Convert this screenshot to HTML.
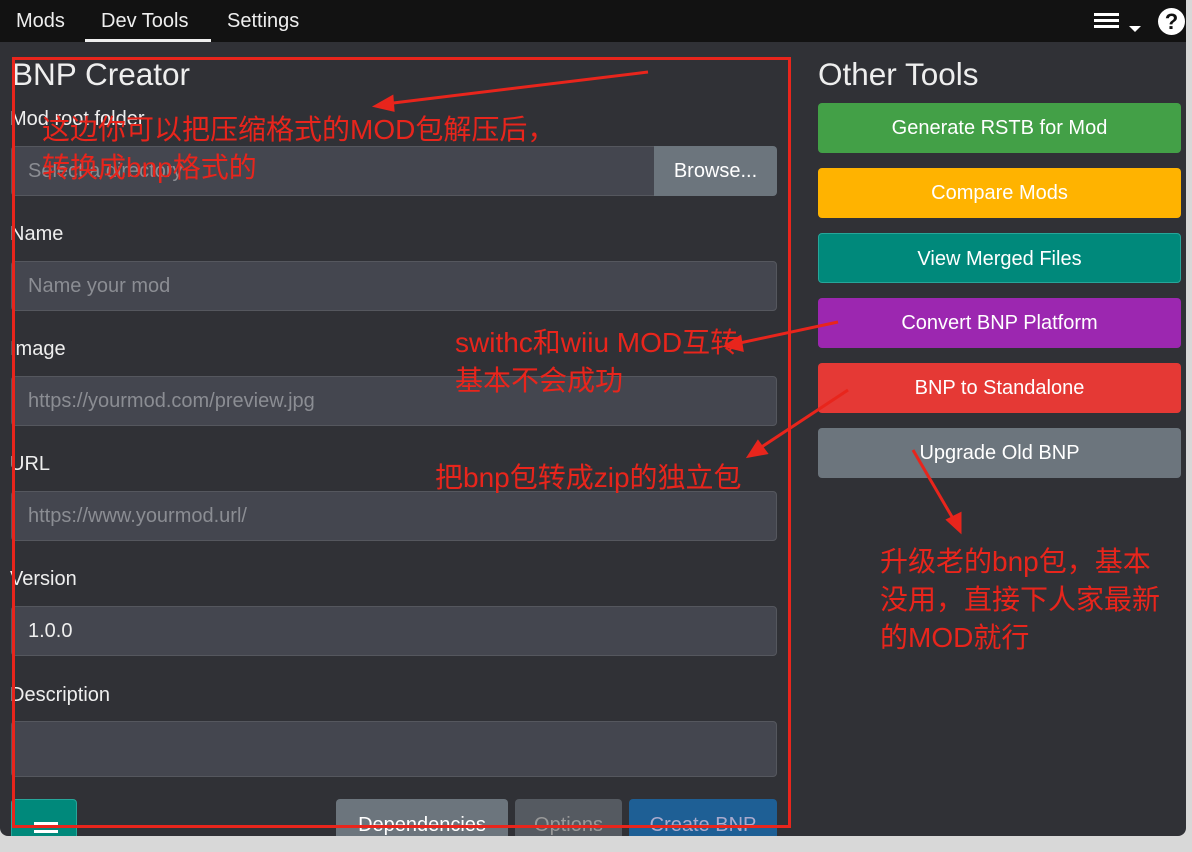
<!DOCTYPE html><html><head><style>
*{box-sizing:border-box;margin:0;padding:0}
body{width:1192px;height:852px;background:#d8d8d8;font-family:"Liberation Sans",Arial,sans-serif;position:relative;overflow:hidden}
#app{position:absolute;left:0;top:0;width:1186px;height:836px;background:#303136;border-radius:0 0 8px 8px;overflow:hidden}
.nav{height:42px;background:#121212;position:relative;color:#eee;font-size:20px}
.nav span{position:absolute;top:10px}
.lbl{position:absolute;left:10px;color:#eee;font-size:20px}
.inp{position:absolute;left:11px;width:766px;height:50px;background:#44464f;border:1px solid #55575e;border-radius:4px;color:#8b8d93;font-size:20px;padding:13px 16px}
.btn{position:absolute;left:818px;width:363px;height:50px;border-radius:4px;color:#fff;font-size:20px;text-align:center;line-height:50px}
.ann{position:absolute;color:#e8251c;font-family:"Liberation Sans","Noto Sans CJK SC",sans-serif;font-size:28px;line-height:38px;white-space:nowrap}
</style></head><body>
<div id="app">
<div class="nav"><span style="left:16px">Mods</span><span style="left:101px">Dev Tools</span><span style="left:227px">Settings</span>
<div style="position:absolute;left:85px;top:39px;width:126px;height:3px;background:#eee"></div>
<div style="position:absolute;left:1094px;top:13px;width:25px;height:3px;background:#fff;box-shadow:0 6px 0 #fff,0 12px 0 #fff"></div>
<div style="position:absolute;left:1129px;top:26px;border:6px solid transparent;border-top:6px solid #fff;border-bottom:0"></div>
<div style="position:absolute;left:1158px;top:8px;width:27px;height:27px;border-radius:50%;background:#fff;color:#111;font-weight:bold;font-size:22px;text-align:center;line-height:27px">?</div>
</div>
<div style="position:absolute;left:12px;top:56px;color:#eee;font-size:31.5px">BNP Creator</div>
<div style="position:absolute;left:818px;top:56px;color:#eee;font-size:31.5px">Other Tools</div>
<div class="lbl" style="top:108px">Mod root folder</div>
<div class="inp" style="top:146px;width:645px;border-radius:4px 0 0 4px">Select a directory</div>
<div style="position:absolute;left:654px;top:146px;width:123px;height:50px;background:#6c757d;border-radius:0 4px 4px 0;color:#fff;font-size:20px;text-align:center;line-height:50px">Browse...</div>
<div class="lbl" style="top:223px">Name</div>
<div class="inp" style="top:261px">Name your mod</div>
<div class="lbl" style="top:338px">Image</div>
<div class="inp" style="top:376px">https://yourmod.com/preview.jpg</div>
<div class="lbl" style="top:453px">URL</div>
<div class="inp" style="top:491px">https://www.yourmod.url/</div>
<div class="lbl" style="top:568px">Version</div>
<div class="inp" style="top:606px;color:#eee">1.0.0</div>
<div class="lbl" style="top:684px">Description</div>
<div class="inp" style="top:721px;height:56px"></div>
<div style="position:absolute;left:11px;top:799px;width:66px;height:50px;background:#00897b;border:1px solid #26a69a;border-radius:4px"><div style="position:absolute;left:22px;top:22px;width:24px;height:3px;background:#fff;box-shadow:0 8px 0 #fff"></div></div>
<div style="position:absolute;left:336px;top:799px;width:172px;height:50px;background:#6c757d;border-radius:4px;color:#fff;font-size:20px;text-align:center;line-height:52px">Dependencies</div>
<div style="position:absolute;left:515px;top:799px;width:107px;height:50px;background:#555a61;border-radius:4px;color:#999;font-size:20px;text-align:center;line-height:52px">Options</div>
<div style="position:absolute;left:629px;top:799px;width:148px;height:50px;background:#1e5f95;border-radius:4px;color:#aac;font-size:20px;text-align:center;line-height:52px">Create BNP</div>
<div class="btn" style="top:103px;background:#43a047">Generate RSTB for Mod</div>
<div class="btn" style="top:168px;background:#ffb300">Compare Mods</div>
<div class="btn" style="top:233px;background:#00897b;border:1px solid #26a69a">View Merged Files</div>
<div class="btn" style="top:298px;background:#9c27b0">Convert BNP Platform</div>
<div class="btn" style="top:363px;background:#e53935">BNP to Standalone</div>
<div class="btn" style="top:428px;background:#6c757d">Upgrade Old BNP</div>
</div>
<div style="position:absolute;left:12px;top:57px;width:779px;height:771px;border:3px solid #e8251c"></div>
<svg style="position:absolute;left:0;top:0" width="1192" height="852">
<g stroke="#e8251c" stroke-width="3" fill="#e8251c">
<line x1="648" y1="72" x2="385" y2="104"/><polygon points="376,106 392,97 393,110"/>
<line x1="838" y1="322" x2="735" y2="344"/><polygon points="726,346 740,337 742,350"/>
<line x1="848" y1="390" x2="757" y2="450"/><polygon points="749,456 758,442 766,453"/>
<line x1="913" y1="450" x2="955" y2="522"/><polygon points="960,531 948,520 960,514"/>
</g></svg>
<div class="ann" style="left:42px;top:111px">这边你可以把压缩格式的MOD包解压后，<br>转换成bnp格式的</div>
<div class="ann" style="left:455px;top:324px">swithc和wiiu MOD互转<br>基本不会成功</div>
<div class="ann" style="left:435px;top:459px">把bnp包转成zip的独立包</div>
<div class="ann" style="left:880px;top:543px">升级老的bnp包，基本<br>没用，直接下人家最新<br>的MOD就行</div>
</body></html>
